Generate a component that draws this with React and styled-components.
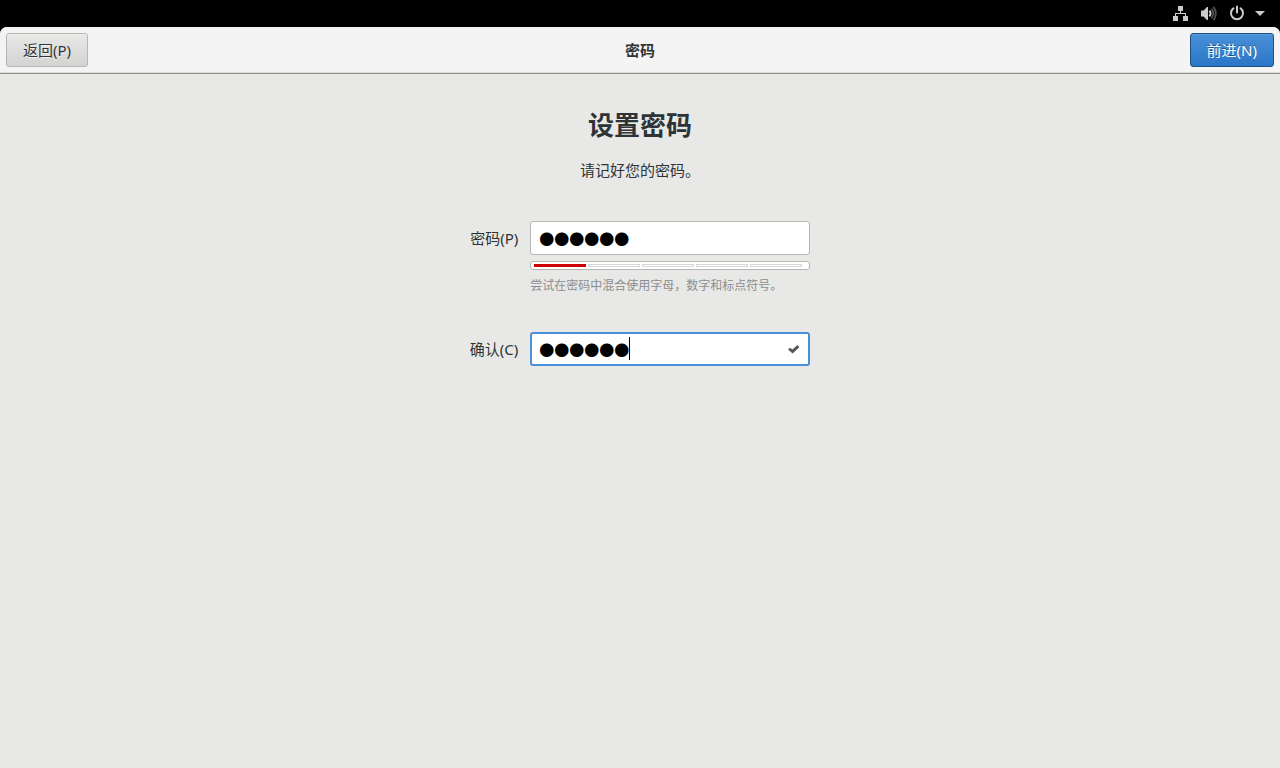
import React, { useState } from 'react'
import styled, { createGlobalStyle } from 'styled-components';

const strengthLevels = [1, 2, 3, 4, 5];

function StatusIcons() {
    return (
        <StatusMenu type="button" aria-label="系统菜单">
            <svg width="16" height="16" viewBox="0 0 16 16" fill="currentColor">
                <path d="M5 1h5v5H8v2h5v3h2v5h-5v-5h2V9H3v2h2v5H0v-5h2V8h5V6H5z" />
            </svg>
            <svg width="16" height="16" viewBox="0 0 16 16" fill="currentColor">
                <path d="M0 5.5h2.5L6 2h1v13H6l-3.500-3.500H0z" />
                <path d="M8.400 5.800c1.500 1.500 1.500 3.900 0 5.400" fill="none" stroke="currentColor" strokeWidth="2" />
                <path d="M10.400 3.800c2.400 2.600 2.400 6.800 0 9.400" fill="none" stroke="currentColor" strokeWidth="1.8" opacity="0.4" />
                <path d="M12.400 1.800c3.200 3.800 3.200 9.600 0 13.400" fill="none" stroke="currentColor" strokeWidth="1.8" opacity="0.4" />
            </svg>
            <svg width="16" height="16" viewBox="0 0 16 16" fill="none" stroke="currentColor" strokeWidth="2" strokeLinecap="round">
                <path d="M4.400 3.400a6 6 0 1 0 7.200 0M8 1.500v6" />
            </svg>
            <svg width="10" height="16" viewBox="0 0 10 16" fill="currentColor">
                <path d="M0 6h10L5 11z" />
            </svg>
        </StatusMenu>
    )
}

function App() {
    const [password, setPassword] = useState('●●●●●●');
    const [confirm, setConfirm] = useState('●●●●●●');
    const strength = 1;

    return (
        <>
            <GlobalStyle />
            <TopBar>
                <StatusIcons />
            </TopBar>
            <Window>
                <HeaderBar>
                    <HeaderButton type="button">返回(P)</HeaderButton>
                    <HeaderTitle>密码</HeaderTitle>
                    <HeaderButton type="submit" form="password-form" $suggested>前进(N)</HeaderButton>
                </HeaderBar>
                <Page>
                    <Title>设置密码</Title>
                    <Subtitle>请记好您的密码。</Subtitle>
                    <Form id="password-form" onSubmit={(e) => e.preventDefault()}>
                        <Label htmlFor="password">密码(P)</Label>
                        <Field>
                            <Entry id="password" type="text" autoComplete="off" value={password}
                                onChange={(e) => setPassword(e.target.value)} />
                            <StrengthBar role="meter" aria-label="密码强度" aria-valuemin={0} aria-valuemax={5} aria-valuenow={strength}>
                                {strengthLevels.map((level) => (
                                    <Segment key={level} $filled={level <= strength} />
                                ))}
                            </StrengthBar>
                            <Hint>尝试在密码中混合使用字母，数字和标点符号。</Hint>
                        </Field>
                        <Label htmlFor="confirm">确认(C)</Label>
                        <Field>
                            <Entry id="confirm" type="text" autoComplete="off" value={confirm} $active
                                onChange={(e) => setConfirm(e.target.value)} />
                            <Caret />
                            <CheckMark viewBox="0 0 16 16">
                                <path d="M2 8.6 4 6.8 6.400 8.400 11.400 4 13.400 6.200 6.600 12.600z" />
                            </CheckMark>
                        </Field>
                    </Form>
                </Page>
            </Window>
        </>
    )
}

const GlobalStyle = createGlobalStyle`
    *{
        box-sizing:border-box;
    }
    html, body, #root{
        height:100%;
    }
    body{
        margin:0;
        background:#000;
        color:#2e3436;
        font-family:"Noto Sans", "Noto Sans CJK SC", sans-serif;
        font-size:15px;
    }
    #root{
        display:flex;
        flex-direction:column;
    }
    button, input{
        font:inherit;
    }
`
const TopBar = styled.div`
    height:27px;
    flex:none;
    display:flex;
    justify-content:flex-end;
    align-items:center;
    padding:0 15px 1px;
    background:#000;
`
const StatusMenu = styled.button`
    display:flex;
    align-items:center;
    gap:12px;
    padding:0;
    border:0;
    background:none;
    color:#ccc;
    svg:last-child{
        margin-left:-2px;
    }
`
const Window = styled.div`
    flex:1;
    display:flex;
    flex-direction:column;
    border-radius:7px 7px 0 0;
    overflow:hidden;
    background:#e8e8e6;
`
const HeaderBar = styled.header`
    height:47px;
    flex:none;
    display:grid;
    grid-template-columns:1fr auto 1fr;
    align-items:center;
    padding:0 6px;
    background:#f4f4f4;
    border-bottom:1px solid #8b8e8a;
    box-shadow:inset 0 -1px #dcdcda;
`
const HeaderButton = styled.button`
    height:34px;
    padding:0 16px 2px;
    justify-self:${({ $suggested }) => ($suggested ? 'end' : 'start')};
    border:1px solid ${({ $suggested }) => ($suggested ? '#1c5187' : '#b6b6b3')};
    border-radius:3px;
    background:${({ $suggested }) => ($suggested
        ? 'linear-gradient(#4a90d9, #2a76c6)'
        : 'linear-gradient(#e8e8e7, #d3d3d1)')};
    box-shadow:inset 0 1px ${({ $suggested }) => ($suggested ? '#5b9bdd' : '#f0f0ef')};
    color:${({ $suggested }) => ($suggested ? '#fff' : '#2e3436')};
    text-shadow:${({ $suggested }) => ($suggested ? '0 -1px rgba(0,0,0,0.4)' : '0 1px rgba(255,255,255,0.7)')};
`
const HeaderTitle = styled.div`
    padding-bottom:2px;
    font-weight:bold;
`
const Page = styled.main`
    display:flex;
    flex-direction:column;
    align-items:center;
    padding:33px 24px 24px;
`
const Title = styled.h1`
    margin:0;
    font-size:26px;
    line-height:36px;
`
const Subtitle = styled.p`
    margin:15px 0 39px;
    line-height:24px;
`
const Form = styled.form`
    display:grid;
    grid-template-columns:auto 280px;
    column-gap:12px;
    row-gap:37px;
`
const Label = styled.label`
    line-height:34px;
    text-align:right;
`
const Field = styled.div`
    position:relative;
`
const Entry = styled.input`
    display:block;
    width:100%;
    height:34px;
    padding:0 ${({ $active }) => ($active ? '7px' : '8px')};
    border:${({ $active }) => ($active ? '2px solid #4a90d9' : '1px solid #b6b6b3')};
    border-radius:3px;
    outline:0;
    background:#fff;
    color:#000;
    font-family:"Noto Sans CJK SC", sans-serif;
`
const Caret = styled.span`
    position:absolute;
    left:99px;
    top:5px;
    width:1px;
    height:23px;
    background:#000;
`
const CheckMark = styled.svg`
    position:absolute;
    right:8px;
    top:9px;
    width:16px;
    height:16px;
    fill:#555b5a;
`
const StrengthBar = styled.div`
    display:flex;
    gap:2px;
    height:9px;
    margin-top:6px;
    padding:2px 7px 2px 3px;
    border:1px solid #b6b6b3;
    border-radius:3px;
    background:#fff;
`
const Segment = styled.span`
    flex:1;
    border:1px solid ${({ $filled }) => ($filled ? '#cc0000' : '#d6d6d6')};
    background:${({ $filled }) => ($filled ? '#cc0000' : '#fff')};
`
const Hint = styled.p`
    margin:7px 0 0;
    font-size:12px;
    line-height:18px;
    color:#8b8e8f;
`
export default App
